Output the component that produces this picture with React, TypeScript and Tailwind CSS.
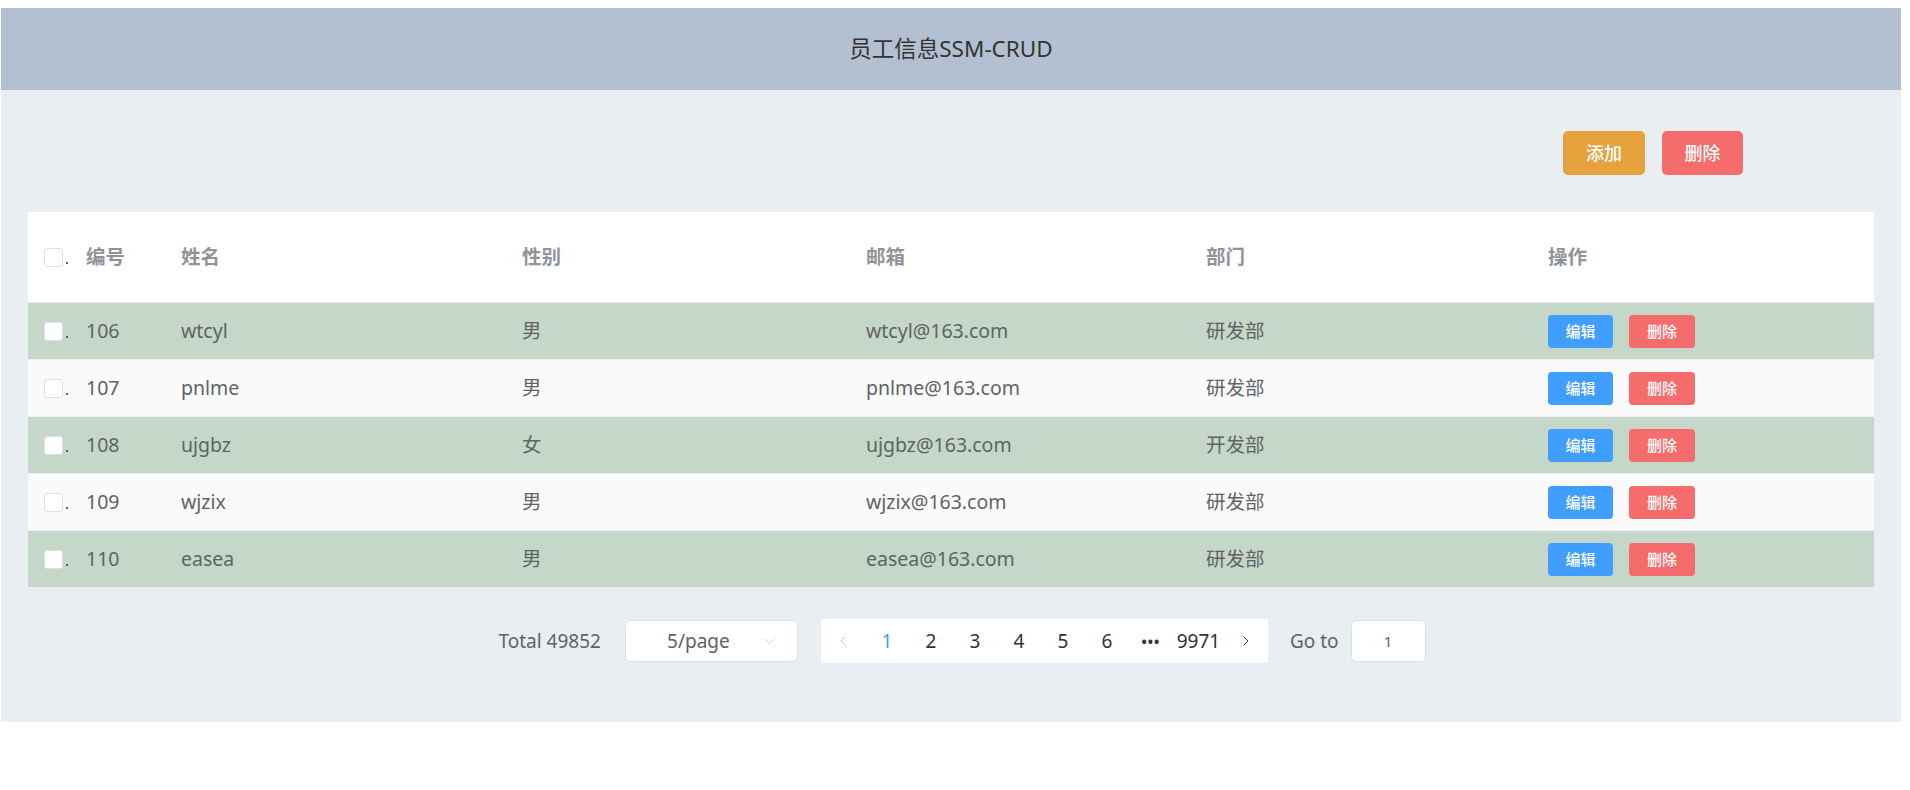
import { ChevronDown, ChevronLeft, ChevronRight } from "lucide-react";

type Row = { id: number; name: string; gender: string; email: string; dept: string };

const rows: Row[] = [
  { id: 106, name: "wtcyl", gender: "男", email: "wtcyl@163.com", dept: "研发部" },
  { id: 107, name: "pnlme", gender: "男", email: "pnlme@163.com", dept: "研发部" },
  { id: 108, name: "ujgbz", gender: "女", email: "ujgbz@163.com", dept: "开发部" },
  { id: 109, name: "wjzix", gender: "男", email: "wjzix@163.com", dept: "研发部" },
  { id: 110, name: "easea", gender: "男", email: "easea@163.com", dept: "研发部" },
];

const cols = "grid grid-cols-[46px_95px_341px_344px_340px_342px_1fr] items-center";

function Check() {
  return (
    <div className="flex items-end pl-4">
      <span className="block h-[19px] w-[19px] rounded-[3px] border border-[#dcdfe6] bg-white" />
      <span className="mb-[3px] ml-[3px] block h-[2px] w-[2px] bg-[#606266]" />
    </div>
  );
}

export default function App() {
  const pages = ["1", "2", "3", "4", "5", "6"];

  return (
    <div className="min-h-screen bg-white pt-2 font-['Noto_Sans','Noto_Sans_CJK_SC',sans-serif]">
      <div className="ml-px w-[1900px]">
        <header className="flex h-[82px] items-center justify-center bg-[#b3c0d1] text-[22.5px] text-[#333]">
          员工信息SSM-CRUD
        </header>

        <main className="h-[632px] bg-[#e9eef3] px-[27px] pt-[41px]">
          <div className="flex justify-end gap-[17px] pr-[131px]">
            <button className="h-[44px] w-[82px] rounded-[5px] bg-[#e6a23c] text-[18px] font-medium text-white">
              添加
            </button>
            <button className="h-[44px] w-[81px] rounded-[5px] bg-[#f56c6c] text-[18px] font-medium text-white">
              删除
            </button>
          </div>

          <div className="mt-[37px] bg-white text-[19.5px]">
            <div className={`${cols} h-[91px] border-b border-[#ebeef5] font-bold text-[#909399]`}>
              <Check />
              <div className="pl-3">编号</div>
              <div className="pl-3">姓名</div>
              <div className="pl-3">性别</div>
              <div className="pl-3">邮箱</div>
              <div className="pl-3">部门</div>
              <div className="pl-3">操作</div>
            </div>
            {rows.map((r, i) => (
              <div
                key={r.id}
                className={`${cols} h-[57px] border-b border-[#ebeef5] text-[#606266] ${
                  i % 2 === 0 ? "bg-[#c4d7c8]" : "bg-[#fafafa]"
                }`}
              >
                <Check />
                <div className="pl-3">{r.id}</div>
                <div className="pl-3">{r.name}</div>
                <div className="pl-3">{r.gender}</div>
                <div className="pl-3">{r.email}</div>
                <div className="pl-3">{r.dept}</div>
                <div className="flex gap-4 pl-3">
                  <button className="h-[33px] w-[65px] rounded-[4px] bg-[#409eff] text-[15px] font-medium text-white">
                    编辑
                  </button>
                  <button className="h-[33px] w-[66px] rounded-[4px] bg-[#f56c6c] text-[15px] font-medium text-white">
                    删除
                  </button>
                </div>
              </div>
            ))}
          </div>

          <div className="mt-[31px] flex items-center justify-center pl-[22px] text-[19px]">
            <span className="text-[#606266]">Total 49852</span>
            <div className="relative ml-[24px] flex h-[42px] w-[173px] items-center justify-center rounded-[5px] border border-[#dcdfe6] bg-white pr-[26px] text-[#606266]">
              5/page
              <ChevronDown size={17} strokeWidth={1.2} className="absolute right-[19px] text-[#c0c4cc]" />
            </div>
            <div className="ml-[23px] flex h-[44px] items-center bg-white text-[#303133]">
              <span className="flex w-[44px] justify-center text-[#c0c4cc]">
                <ChevronLeft size={16} strokeWidth={1.4} />
              </span>
              {pages.map((p) => (
                <span key={p} className={`flex w-[44px] justify-center ${p === "1" ? "text-[#409eff]" : ""}`}>
                  {p}
                </span>
              ))}
              <span className="flex w-[44px] justify-center text-[14px] font-bold tracking-[1px]">•••</span>
              <span className="flex w-[51px] justify-center">9971</span>
              <span className="flex w-[44px] justify-center">
                <ChevronRight size={16} strokeWidth={1.4} />
              </span>
            </div>
            <span className="ml-[22px] text-[#606266]">Go to</span>
            <div className="ml-[12px] flex h-[42px] w-[75px] items-center justify-center rounded-[5px] border border-[#dcdfe6] bg-white text-[15px] text-[#606266]">
              1
            </div>
          </div>
        </main>
      </div>
    </div>
  );
}
